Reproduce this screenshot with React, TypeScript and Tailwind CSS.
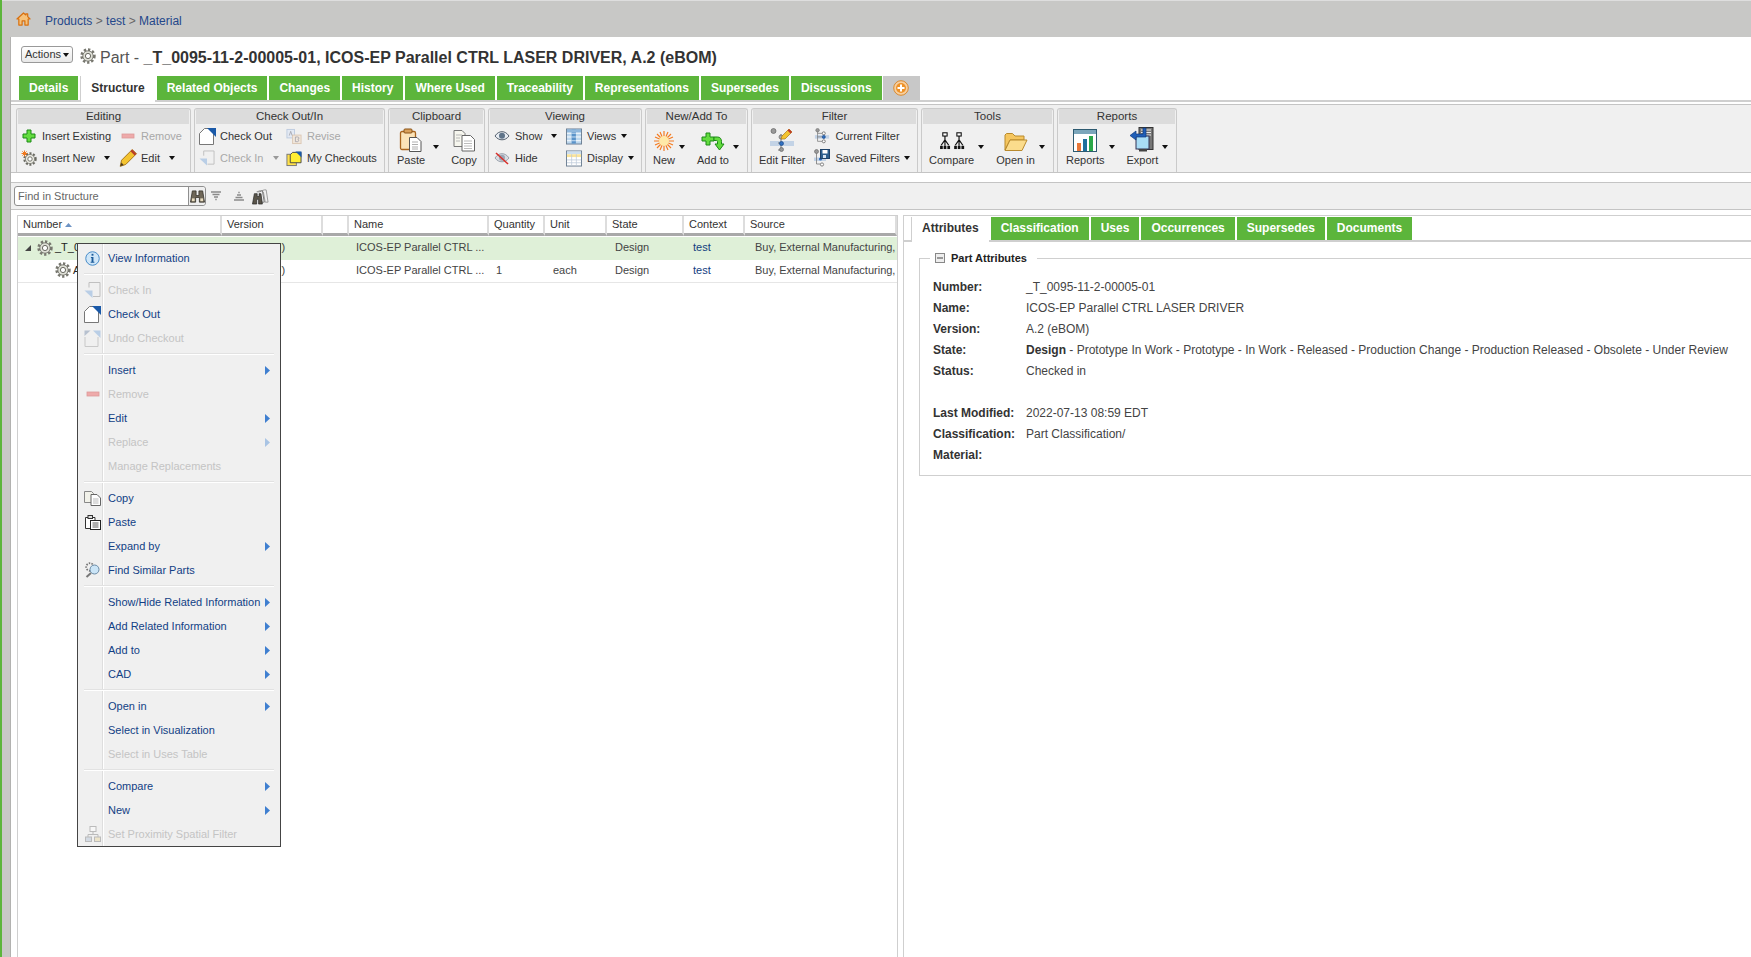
import type { ReactNode } from "react";

const GREEN = "bg-[#5cb53b]";

type IconProps = { className?: string; dim?: boolean };

function Gear({ className = "h-4 w-4" }: IconProps) {
  return (
    <svg viewBox="0 0 16 16" className={className}>
      <circle cx="8" cy="8" r="6.4" fill="none" stroke="#77776f" strokeWidth="2.6" strokeDasharray="2.3 1.9" />
      <circle cx="8" cy="8" r="5.2" fill="#dedfd6" stroke="#6a6a62" strokeWidth="0.8" />
      <circle cx="8" cy="8" r="2.6" fill="#fff" stroke="#6a6a62" strokeWidth="1" />
    </svg>
  );
}

function Home() {
  return (
    <svg viewBox="0 0 16 15" className="h-[14px] w-[15px]">
      <path d="M8 1 1 7.5h2V14h3.5V9.5h3V14H13V7.5h2L12.5 5V2h-2v1.2L8 1Z" fill="#f6c27a" stroke="#d9700f" strokeWidth="1.3" strokeLinejoin="round" />
    </svg>
  );
}

function Plus() {
  return (
    <svg viewBox="0 0 16 16" className="h-4 w-4">
      <path d="M6 2h4v4h4v4h-4v4H6v-4H2V6h4V2Z" fill="#63dc3f" stroke="#1d8a17" strokeWidth="1" />
    </svg>
  );
}

function Minus() {
  return (
    <svg viewBox="0 0 16 16" className="h-4 w-4">
      <rect x="2" y="6" width="12" height="4" fill="#eeaaaa" stroke="#dd9a9a" strokeWidth="0.8" />
    </svg>
  );
}

function GearNew() {
  return (
    <svg viewBox="0 0 16 16" className="h-4 w-4">
      <circle cx="9" cy="9" r="5.6" fill="none" stroke="#6a6a62" strokeWidth="2.2" strokeDasharray="2 1.6" />
      <circle cx="9" cy="9" r="4.6" fill="#e8e8e0" stroke="#6a6a62" strokeWidth="0.7" />
      <circle cx="9" cy="9" r="2.2" fill="#fff" stroke="#6a6a62" strokeWidth="0.9" />
      <path d="M3.5 0.5v6M0.5 3.5h6M1.4 1.4l4.2 4.2M5.6 1.4 1.4 5.6" stroke="#f0781e" strokeWidth="1" />
    </svg>
  );
}

function Pencil() {
  return (
    <svg viewBox="0 0 18 18" className="h-[20px] w-[20px] shrink-0">
      <path d="M2 16.5 3.2 11 12.8 1.4l3.8 3.8L7 14.8 2 16.5Z" fill="#f4c430" stroke="#a7761a" strokeWidth="0.9" strokeLinejoin="round" />
      <path d="M12.8 1.4l3.8 3.8-1.6 1.6-3.8-3.8 1.6-1.6Z" fill="#b8402a" />
      <path d="M2 16.5 3.2 13l1.8 2.4L2 16.5Z" fill="#4b3a20" />
    </svg>
  );
}

function CheckOutIcon() {
  return (
    <svg viewBox="0 0 17 17" className="h-[17px] w-[17px] shrink-0">
      <path d="M.5 5.500 5.500.5H14.500V16.500H.5Z" fill="#fff" stroke="#777" />
      <path d="M8 0h9V9L8 0Z" fill="#1a59a8" />
    </svg>
  );
}

function CheckInIcon() {
  return (
    <svg viewBox="0 0 17 17" className="h-[17px] w-[17px]" opacity="0.55">
      <path d="M5 .5h11v14H9M5 .5v5" fill="none" stroke="#999" />
      <path d="M.5 8.5h8V16L.5 8.5Z" fill="#8db3df" />
    </svg>
  );
}

function UndoIcon() {
  return (
    <svg viewBox="0 0 17 17" className="h-[17px] w-[17px]" opacity="0.55">
      <path d="M1 7v9.5h13V7" fill="none" stroke="#aaa" />
      <path d="M.5.500h6L.5 6V.5Z" fill="#8a9bb5" />
      <path d="M9 .5h7.5V8L9 .5Z" fill="#8db3df" />
    </svg>
  );
}

function ReviseIcon() {
  return (
    <svg viewBox="0 0 17 17" className="h-[17px] w-[17px]" opacity="0.6">
      <rect x="1" y="1" width="8" height="9" fill="#dbe6f5" stroke="#9db3d6" />
      <rect x="7" y="7" width="9" height="9" fill="#f3e2cf" stroke="#cfae8e" />
      <path d="M3.5 7.5 5 3l1.5 4.5M10 9v5h2.5a1.3 1.3 0 0 0 0-2.500a1.200 1.200 0 0 0 0-2.500H10Z" fill="none" stroke="#667" strokeWidth="0.8" />
    </svg>
  );
}

function MyCheckouts() {
  return (
    <svg viewBox="0 0 17 17" className="h-[17px] w-[17px]">
      <rect x="1" y="4" width="10" height="12" fill="#ffe14a" stroke="#777" />
      <path d="M4.500 4.500 7 2h9v11H4.500V4.500Z" fill="#ffee33" stroke="#444" />
      <path d="M10 1h6.500v6.500L10 1Z" fill="#1a59a8" />
    </svg>
  );
}

function Eye({ slash }: { slash?: boolean }) {
  return (
    <svg viewBox="0 0 16 16" className="h-4 w-4">
      <path d="M1 8c2-3 4.300-4.300 7-4.300S13 5 15 8c-2 2.600-4.300 3.800-7 3.800S3 10.600 1 8Z" fill={slash ? "#d8dce2" : "#e8edf3"} stroke={slash ? "#9aa2ad" : "#55606e"} />
      <circle cx="8" cy="7.700" r="3" fill={slash ? "#9aa6b5" : "#5e7389"} />
      {slash && <path d="M2 3l12 11" stroke="#d9302a" strokeWidth="1.600" />}
    </svg>
  );
}

function Views() {
  return (
    <svg viewBox="0 0 17 17" className="h-[17px] w-[17px]">
      <rect x="0.500" y="0.500" width="16" height="16" fill="#bcd7ee" stroke="#6a7d91" />
      <path d="M1 5h15M1 9h15M1 13h15" stroke="#fff" />
      <rect x="6" y="1" width="4.500" height="15" fill="#5a93c9" />
      <path d="M6 5h4.500M6 9h4.500M6 13h4.500" stroke="#d0e3f4" />
      <path d="M1 1h15v3H1z" fill="#8fb7dc" />
    </svg>
  );
}

function Display() {
  return (
    <svg viewBox="0 0 17 17" className="h-[17px] w-[17px]">
      <rect x="0.500" y="0.500" width="16" height="16" fill="#fff" stroke="#6a7d91" />
      <rect x="1" y="1" width="15" height="3" fill="#cddff0" />
      <rect x="1" y="4" width="15" height="3" fill="#fbe49a" />
      <path d="M1 10h15M1 13h15M6 4v12M11 4v12" stroke="#bccad8" strokeWidth="0.800" />
    </svg>
  );
}

function PasteIcon() {
  return (
    <svg viewBox="0 0 24 24" className="h-6 w-6">
      <rect x="1.500" y="3.500" width="15" height="18" rx="1.500" fill="#fbe3b8" stroke="#a9651f" strokeWidth="1.300" />
      <rect x="5" y="1" width="8" height="4" rx="1" fill="#d9a05a" stroke="#8a5217" />
      <path d="M10.500 9.500H18l4 4v10H10.500V9.500Z" fill="#fff" stroke="#555" />
      <path d="M13 14h6M13 16.500h6M13 19h6M13 21h6" stroke="#999" strokeWidth="0.800" />
    </svg>
  );
}

function CopyIcon() {
  return (
    <svg viewBox="0 0 22 22" className="h-[22px] w-[22px]">
      <path d="M1 .5h8l3 3v13H1V.5Z" fill="#f6f6ee" stroke="#777" />
      <path d="M9 5.500h8.500l4 4V21H9V5.500Z" fill="#fff" stroke="#666" />
      <path d="M3 5h6M3 8h4M3 11h4M11 11h8M11 13.500h8M11 16h8M11 18.500h8" stroke="#aaa" strokeWidth="0.800" />
    </svg>
  );
}

function StarBurst() {
  return (
    <svg viewBox="0 0 22 22" className="h-[22px] w-[22px]">
      <path d="M11 1v20M1 11h20M4 4l14 14M18 4 4 18M7 2l8 18M15 2 7 20M2 7l18 8M2 15l18-8" stroke="#f47b20" strokeWidth="1.200" />
      <circle cx="11" cy="11" r="5" fill="#ffe9a8" />
    </svg>
  );
}

function AddTo() {
  return (
    <svg viewBox="0 0 24 20" className="h-5 w-6">
      <path d="M5 1h4v4h4v4H9v4H5V9H1V5h4V1Z" fill="#63dc3f" stroke="#1d8a17" />
      <path d="M13 5h3.500c2.500 0 4 1.800 4 4.500V12H23l-4.500 6L14 12h2.500V9.500c0-.7-.3-1-1-1H13V5Z" fill="#63dc3f" stroke="#1d8a17" />
    </svg>
  );
}

function Tree({ className = "h-4 w-4" }: IconProps) {
  return (
    <svg viewBox="0 0 16 18" className={className}>
      <rect x="0" y="8" width="16" height="4" fill="#c3d3e6" />
      <circle cx="3" cy="2.500" r="2" fill="#999" stroke="#666" strokeWidth="0.600" />
      <path d="M3 4v11h5M3 10h5M3 6h5" fill="none" stroke="#777" strokeWidth="0.800" />
      <circle cx="10" cy="6" r="1.700" fill="#fff" stroke="#555" strokeWidth="0.800" />
      <circle cx="10" cy="10" r="1.700" fill="#2f6fc0" stroke="#1a4a8c" strokeWidth="0.800" />
      <circle cx="10" cy="15" r="1.700" fill="#fff" stroke="#555" strokeWidth="0.800" />
    </svg>
  );
}

function EditFilter() {
  return (
    <svg viewBox="0 0 24 24" className="h-6 w-6">
      <rect x="0" y="13" width="24" height="5" fill="#c3d3e6" />
      <circle cx="3.500" cy="3" r="2.500" fill="#999" stroke="#666" strokeWidth="0.700" />
      <path d="M11 6v16h0M11 15H8M11 22H8" stroke="#777" fill="none" />
      <circle cx="11" cy="9" r="2" fill="#aaa" stroke="#666" strokeWidth="0.700" />
      <circle cx="11.500" cy="15.500" r="2" fill="#2f6fc0" stroke="#1a4a8c" strokeWidth="0.700" />
      <circle cx="11.500" cy="21.500" r="2" fill="#999" stroke="#666" strokeWidth="0.700" />
      <path d="M11 11 12 8 19 1l3 3-7 7-4 0Z" fill="#f4c430" stroke="#a7761a" strokeWidth="0.700" />
      <path d="M19 1l3 3-1.500 1.500-3-3L19 1Z" fill="#c0392b" />
    </svg>
  );
}

function SavedFilter() {
  return (
    <svg viewBox="0 0 16 18" className="h-[18px] w-4">
      <rect x="0" y="8.500" width="12" height="3.500" fill="#c3d3e6" />
      <circle cx="2.500" cy="2.500" r="2" fill="#999" stroke="#666" strokeWidth="0.600" />
      <path d="M2.500 4v11h4" fill="none" stroke="#777" strokeWidth="0.800" />
      <circle cx="8" cy="15.500" r="1.600" fill="#fff" stroke="#555" strokeWidth="0.700" />
      <circle cx="6.500" cy="10" r="1.600" fill="#2f6fc0" />
      <rect x="6.500" y="0.500" width="9" height="9" fill="#2c5f8f" stroke="#1d4168" />
      <rect x="8.500" y="1" width="5" height="3.500" fill="#fff" />
      <rect x="9" y="6" width="3" height="3" fill="#d6e4f2" />
    </svg>
  );
}

function Compare() {
  return (
    <svg viewBox="0 0 24 18" className="h-[20px] w-[26px]">
      {[1, 14].map((x) => (
        <g key={x} transform={`translate(${x} 0)`}>
          <rect x="2.500" y="0.500" width="4" height="3" fill="#fff" stroke="#111" />
          <path d="M4.500 3.500v6M4.500 7 1 12M4.500 7 8 12M4.500 9.500v3" stroke="#111" fill="none" strokeWidth="1.100" />
          <rect x="0" y="12.500" width="2.500" height="3" fill="#111" />
          <rect x="3.300" y="12.500" width="2.500" height="3" fill="#111" />
          <rect x="6.700" y="12.500" width="2.500" height="3" fill="#111" />
        </g>
      ))}
    </svg>
  );
}

function Folder() {
  return (
    <svg viewBox="0 0 24 20" className="h-5 w-6">
      <path d="M1 18V3l1.500-1.500h6L11 4h9v4H6L1 18Z" fill="#f5c65f" stroke="#b98a2d" />
      <path d="M1 18.500 6 8h17l-5 10.500H1Z" fill="#fbdc8c" stroke="#b98a2d" />
    </svg>
  );
}

function ReportsIcon() {
  return (
    <svg viewBox="0 0 24 23" className="h-[23px] w-6">
      <rect x="0.500" y="0.500" width="23" height="22" fill="#fff" stroke="#2d5a70" />
      <rect x="1" y="1" width="22" height="4" fill="#7ba6bb" />
      <rect x="4" y="14" width="4" height="8" fill="#e8783a" />
      <rect x="10" y="10" width="4" height="12" fill="#1f6f9c" />
      <rect x="16" y="7" width="4" height="15" fill="#2aa84a" />
    </svg>
  );
}

function ExportIcon() {
  return (
    <svg viewBox="0 0 24 25" className="h-[25px] w-6">
      <rect x="9" y="0.500" width="14" height="22" fill="#777" stroke="#333" />
      <path d="M11 3h10M11 5.500h10M11 8h10" stroke="#eee" />
      <rect x="6" y="9" width="13" height="13" fill="#a9ddf6" stroke="#335" />
      <rect x="9" y="22" width="8" height="2.500" fill="#444" />
      <path d="M13 1v6H6V4L0 8.500 6 13v-3h10V1h-3Z" fill="#1f5fb8" stroke="#0e3b7c" strokeWidth="0.700" />
    </svg>
  );
}

function AddTabIcon() {
  return (
    <svg viewBox="0 0 16 16" className="h-4 w-4">
      <circle cx="8" cy="8" r="7.300" fill="#f7cf9f" stroke="#d98a30" />
      <circle cx="8" cy="8" r="5" fill="#ee9228" />
      <path d="M8 4.500v7M4.500 8h7" stroke="#fff" strokeWidth="2" />
    </svg>
  );
}

function Binoculars({ dim }: IconProps) {
  return (
    <svg viewBox="0 0 16 16" className="h-[15px] w-[15px]">
      <path d="M2.500 2h4v5h3V2h4l2 12H10V9H6v5H.5l2-12Z" fill={dim ? "#777" : "#6f6758"} stroke="#2e2a22" strokeWidth="0.800" />
      <rect x="2" y="10" width="3" height="3" fill="#e8dcc0" />
      <rect x="11" y="10" width="3" height="3" fill="#e8dcc0" />
    </svg>
  );
}

function FilterDown() {
  return (
    <svg viewBox="0 0 10 10" className="h-[10px] w-[10px]">
      <path d="M0 1h10M1.500 3.500h7M3 6h4M4.300 8.500h1.400" stroke="#8a8a8a" strokeWidth="1.300" />
    </svg>
  );
}

function FilterUp() {
  return (
    <svg viewBox="0 0 10 10" className="h-[10px] w-[10px]">
      <path d="M0 9h10M1.500 6.500h7M3 4h4M4.300 1.500h1.400" stroke="#8a8a8a" strokeWidth="1.300" />
    </svg>
  );
}

function MultiBinoculars() {
  return (
    <svg viewBox="0 0 18 18" className="h-[17px] w-[17px]">
      <path d="M7 3h3l3-1h2l2 13h-3L12 4" fill="none" stroke="#999" />
      <path d="M5 4h3l2-1h1l2 12h-3L8 6" fill="none" stroke="#777" />
      <path d="M2.500 6h3v3h2V6h2l1.500 11H7v-5H5v5H.5l2-11Z" fill="#5a554a" stroke="#222" strokeWidth="0.700" />
    </svg>
  );
}

function InfoIcon() {
  return (
    <svg viewBox="0 0 16 16" className="h-[15px] w-[15px]">
      <circle cx="8" cy="8" r="7.200" fill="#cfe6f8" stroke="#3f86c6" />
      <rect x="7" y="3" width="2" height="2" fill="#1d5c9a" />
      <path d="M6.300 6.500H9V11.500h1v1H6v-1h1v-4H6.300Z" fill="#1d5c9a" />
    </svg>
  );
}

function MenuCopy() {
  return (
    <svg viewBox="0 0 17 15" className="h-[15px] w-[17px]">
      <path d="M.5.500h7l2 2v9H.5V.5Z" fill="#f2f2ea" stroke="#888" />
      <path d="M7 3.500h6l3.500 3.500v7.500H7V3.500Z" fill="#fff" stroke="#666" />
      <path d="M9 8h5.500M9 10h5.500M9 12h5.500" stroke="#aaa" strokeWidth="0.800" />
    </svg>
  );
}

function MenuPaste() {
  return (
    <svg viewBox="0 0 16 15" className="h-[15px] w-4">
      <path d="M.5 2.500h9.500v11H.5v-11Z" fill="#fff" stroke="#333" />
      <rect x="3" y="0.500" width="4.500" height="3" fill="#ddd" stroke="#333" />
      <rect x="5.500" y="5.500" width="10" height="9" fill="#fff" stroke="#222" />
      <path d="M7.500 8h6M7.500 10h6M7.500 12h6" stroke="#333" strokeWidth="0.800" />
    </svg>
  );
}

function FindSimilar() {
  return (
    <svg viewBox="0 0 17 16" className="h-4 w-[17px]">
      <circle cx="6" cy="5" r="3.800" fill="none" stroke="#777" strokeWidth="1.800" strokeDasharray="1.500 1.200" />
      <circle cx="10.500" cy="7.500" r="4.500" fill="#cbe5f7" stroke="#6a8aa5" />
      <path d="M7 11 2.500 15" stroke="#777" strokeWidth="2" />
    </svg>
  );
}

function OrgChart() {
  return (
    <svg viewBox="0 0 16 16" className="h-4 w-4" opacity="0.5">
      <rect x="5" y="0.500" width="6" height="5" fill="#fff" stroke="#888" />
      <path d="M8 5.500v3M3 11V8.500h10V11" fill="none" stroke="#888" />
      <rect x="0.500" y="11" width="6" height="4.500" fill="#b7c6d8" stroke="#888" />
      <rect x="9.500" y="11" width="6" height="4.500" fill="#ead9a5" stroke="#888" />
    </svg>
  );
}

function DropArrow({ className = "", dim }: { className?: string; dim?: boolean }) {
  return (
    <svg viewBox="0 0 6 4" className={`h-[4px] w-[6px] shrink-0 ${className}`}>
      <path d="M0 0h6L3 4Z" fill={dim ? "#999" : "#111"} />
    </svg>
  );
}

function SubArrow({ dim }: { dim?: boolean }) {
  return (
    <svg viewBox="0 0 5 9" className="ml-auto mr-[10px] h-[9px] w-[5px] shrink-0">
      <path d="M0 0 5 4.500 0 9Z" fill={dim ? "#a9c4e4" : "#3f7fd0"} />
    </svg>
  );
}

function SmallBtn(props: { icon: ReactNode; label: string; dim?: boolean; arrow?: string }) {
  return (
    <div className="flex h-[22px] items-center whitespace-nowrap">
      <span className="flex w-[16px] shrink-0 items-center justify-center">{props.icon}</span>
      <span className={`ml-[5px] ${props.dim ? "text-[#a8a8a8]" : "text-[#333]"}`}>{props.label}</span>
      {props.arrow && <DropArrow className={props.arrow} dim={props.dim} />}
    </div>
  );
}

function BigBtn(props: { icon: ReactNode; label: string; className: string; arrow?: string }) {
  return (
    <div className={`flex ${props.className}`}>
      <div className="flex flex-col items-center">
        <span className="flex h-[28px] items-end">{props.icon}</span>
        <span className="mt-px whitespace-nowrap leading-[14px] text-[#333]">{props.label}</span>
      </div>
      {props.arrow && <DropArrow className={`mt-[21px] ${props.arrow}`} />}
    </div>
  );
}

function Group(props: { title: string; width: string; children: ReactNode }) {
  return (
    <section className={`flex h-[64px] shrink-0 flex-col rounded-t-[3px] border border-b-0 border-[#cacaca] ${props.width}`}>
      <h3 className="mx-px h-[15px] bg-[#dcdcdc] text-center text-[11.5px] leading-[15px] font-normal text-[#333]">
        {props.title}
      </h3>
      <div className="flex min-h-0 flex-1">{props.children}</div>
    </section>
  );
}

const mainTabs = ["Details", "Structure", "Related Objects", "Changes", "History", "Where Used", "Traceability", "Representations", "Supersedes", "Discussions"];
const sideTabs = ["Attributes", "Classification", "Uses", "Occurrences", "Supersedes", "Documents"];

const COLS = "grid grid-cols-[204px_101px_26px_140px_56px_62px_77px_61px_1fr]";
const tableHead = ["Number", "Version", "", "Name", "Quantity", "Unit", "State", "Context", "Source"];

function TableRow(props: { green?: boolean; child?: boolean; qty: string; unit: string }) {
  return (
    <div className={`${COLS} h-[23px] items-center whitespace-nowrap pb-[2px] text-[#444] ${props.green ? "bg-[#dff0d8]" : "border-b border-[#e6e6e6] bg-white"}`}>
      <div className="flex items-center overflow-hidden">
        {props.child ? (
          <span className="w-[37px] shrink-0" />
        ) : (
          <svg viewBox="0 0 6 6" className="ml-[7px] mr-[6px] h-[6px] w-[6px] shrink-0">
            <path d="M6 0v6H0Z" fill="#444" />
          </svg>
        )}
        <Gear className="h-[16px] w-[16px] shrink-0" />
        <span className="ml-[2px] text-[#222]">{props.child ? "A.2-00005-01" : "_T_0095-11-2-00005-01"}</span>
      </div>
      <div className="pl-[5px]">A.2 (eBOM)</div>
      <div />
      <div className="pl-[7px]">ICOS-EP Parallel CTRL ...</div>
      <div className="pl-[7px]">{props.qty}</div>
      <div className="pl-[8px]">{props.unit}</div>
      <div className="pl-[8px]">Design</div>
      <div className="pl-[9px] text-[#12407f]">test</div>
      <div className="overflow-hidden pl-[10px]">Buy, External Manufacturing,</div>
    </div>
  );
}

type MenuEntry = { label?: string; icon?: ReactNode; dim?: boolean; sub?: boolean };

const menu: MenuEntry[] = [
  { label: "View Information", icon: <InfoIcon /> },
  {},
  { label: "Check In", icon: <CheckInIcon />, dim: true },
  { label: "Check Out", icon: <CheckOutIcon /> },
  { label: "Undo Checkout", icon: <UndoIcon />, dim: true },
  {},
  { label: "Insert", sub: true },
  { label: "Remove", icon: <Minus />, dim: true },
  { label: "Edit", sub: true },
  { label: "Replace", dim: true, sub: true },
  { label: "Manage Replacements", dim: true },
  {},
  { label: "Copy", icon: <MenuCopy /> },
  { label: "Paste", icon: <MenuPaste /> },
  { label: "Expand by", sub: true },
  { label: "Find Similar Parts", icon: <FindSimilar /> },
  {},
  { label: "Show/Hide Related Information", sub: true },
  { label: "Add Related Information", sub: true },
  { label: "Add to", sub: true },
  { label: "CAD", sub: true },
  {},
  { label: "Open in", sub: true },
  { label: "Select in Visualization" },
  { label: "Select in Uses Table", dim: true },
  {},
  { label: "Compare", sub: true },
  { label: "New", sub: true },
  { label: "Set Proximity Spatial Filter", icon: <OrgChart />, dim: true },
];

function ContextMenu() {
  return (
    <div className="absolute left-[77px] top-[243px] w-[204px] border border-[#444] bg-[linear-gradient(to_right,#f0f0f0_24px,#dedede_24px,#dedede_25px,#fff_25px,#fff_26px,#f0f0f0_26px)] pt-[2px] text-[11px]">
      {menu.map((item, i) =>
        item.label ? (
          <div key={i} className="flex h-[24px] items-center whitespace-nowrap">
            <span className="flex w-[29px] shrink-0 items-center justify-center">{item.icon}</span>
            <span className={`ml-[1px] ${item.dim ? "text-[#c4c4c4]" : "text-[#123f85]"}`}>{item.label}</span>
            {item.sub && <SubArrow dim={item.dim} />}
          </div>
        ) : (
          <div key={i} className="mx-[6px] my-[3px] h-[2px] border-b border-white bg-[#e2e2e2]" />
        ),
      )}
    </div>
  );
}

const attrs: [string, ReactNode][] = [
  ["Number:", "_T_0095-11-2-00005-01"],
  ["Name:", "ICOS-EP Parallel CTRL LASER DRIVER"],
  ["Version:", "A.2 (eBOM)"],
  [
    "State:",
    <>
      <b className="text-[#333]">Design</b> - Prototype In Work - Prototype - In Work - Released - Production Change - Production Released - Obsolete - Under Review
    </>,
  ],
  ["Status:", "Checked in"],
  ["", ""],
  ["Last Modified:", "2022-07-13 08:59 EDT"],
  ["Classification:", "Part Classification/"],
  ["Material:", ""],
];

export default function App() {
  return (
    <div className="relative flex h-[957px] w-[1751px] overflow-hidden bg-[#c8c8c6] font-['Liberation_Sans',Arial,sans-serif] text-[11px]">
      <div className={`w-[2px] shrink-0 ${GREEN}`} />
      <div className="flex min-w-0 flex-1 flex-col">
        <header className="flex h-[37px] shrink-0 items-center gap-[14px] border-t border-[#dedede] pl-[14px] text-[12px]">
          <Home />
          <nav className="mt-[3px] text-[#24478a]">
            Products <span className="text-[#666]">&gt;</span> test <span className="text-[#666]">&gt;</span> Material
          </nav>
        </header>

        <main className="ml-[8px] flex min-h-0 flex-1 flex-col border-l border-[#b2b2b0] bg-white">
          <div className="flex h-[39px] shrink-0 items-center pl-[10px]">
            <button className="mb-[4px] flex h-[17px] w-[52px] items-center justify-center gap-[2px] rounded-[3px] border border-[#999] bg-gradient-to-b from-white to-[#e8e8e8] text-[11px] text-[#333]">
              Actions
              <DropArrow />
            </button>
            <Gear className="mb-[2px] ml-[7px] h-[16px] w-[16px]" />
            <h1 className="ml-[4px] mt-[2px] whitespace-nowrap text-[16px] text-[#555]">
              Part - <b className="text-[#333]">_T_0095-11-2-00005-01, ICOS-EP Parallel CTRL LASER DRIVER, A.2 (eBOM)</b>
            </h1>
          </div>

          <div className="flex h-[26px] shrink-0 items-start gap-[2px] border-b-[2px] border-[#cfcfcf] pl-[8px] text-[12px] font-bold">
            {mainTabs.map((t) =>
              t === "Structure" ? (
                <div key={t} className="z-10 flex h-[26px] items-center border-l border-[#cfcfcf] bg-white px-[10px] pb-[2px] text-[#333]">
                  {t}
                </div>
              ) : (
                <div key={t} className={`flex h-[24px] items-center px-[10px] text-white ${GREEN}`}>
                  {t}
                </div>
              ),
            )}
            <div className="-ml-px flex h-[24px] w-[37px] items-center justify-center bg-[#c8c8c8]">
              <AddTabIcon />
            </div>
          </div>

          <div className="mt-[2px] flex h-[69px] shrink-0 gap-[3px] border-y border-[#c4c4c4] bg-[#f0f0f0] pl-[5px] pt-[3px]">
            <Group title="Editing" width="w-[175px]">
              <div className="ml-[4px] w-[99px] pt-px">
                <SmallBtn icon={<Plus />} label="Insert Existing" />
                <SmallBtn icon={<GearNew />} label="Insert New" arrow="ml-[9px]" />
              </div>
              <div className="pt-px">
                <SmallBtn icon={<Minus />} label="Remove" dim />
                <SmallBtn icon={<Pencil />} label="Edit" arrow="ml-[9px]" />
              </div>
            </Group>
            <Group title="Check Out/In" width="w-[191px]">
              <div className="ml-[4px] w-[87px] pt-px">
                <SmallBtn icon={<CheckOutIcon />} label="Check Out" />
                <SmallBtn icon={<CheckInIcon />} label="Check In" dim arrow="ml-[10px]" />
              </div>
              <div className="pt-px">
                <SmallBtn icon={<ReviseIcon />} label="Revise" dim />
                <SmallBtn icon={<MyCheckouts />} label="My Checkouts" />
              </div>
            </Group>
            <Group title="Clipboard" width="w-[97px]">
              <BigBtn icon={<PasteIcon />} label="Paste" className="ml-[8px]" arrow="ml-[8px]" />
              <BigBtn icon={<CopyIcon />} label="Copy" className="ml-[12px]" />
            </Group>
            <Group title="Viewing" width="w-[154px]">
              <div className="ml-[5px] w-[72px] pt-px">
                <SmallBtn icon={<Eye />} label="Show" arrow="ml-[8px]" />
                <SmallBtn icon={<Eye slash />} label="Hide" />
              </div>
              <div className="pt-px">
                <SmallBtn icon={<Views />} label="Views" arrow="ml-[5px]" />
                <SmallBtn icon={<Display />} label="Display" arrow="ml-[5px]" />
              </div>
            </Group>
            <Group title="New/Add To" width="w-[103px]">
              <BigBtn icon={<StarBurst />} label="New" className="ml-[7px]" arrow="ml-[4px]" />
              <BigBtn icon={<AddTo />} label="Add to" className="ml-[12px]" arrow="ml-[4px]" />
            </Group>
            <Group title="Filter" width="w-[167px]">
              <BigBtn icon={<EditFilter />} label="Edit Filter" className="ml-[7px]" />
              <div className="ml-[9px] pt-px">
                <SmallBtn icon={<Tree />} label="Current Filter" />
                <SmallBtn icon={<SavedFilter />} label="Saved Filters" arrow="ml-[4px]" />
              </div>
            </Group>
            <Group title="Tools" width="w-[133px]">
              <BigBtn icon={<Compare />} label="Compare" className="ml-[7px]" arrow="ml-[4px]" />
              <BigBtn icon={<Folder />} label="Open in" className="ml-[12px]" arrow="ml-[4px]" />
            </Group>
            <Group title="Reports" width="w-[120px]">
              <BigBtn icon={<ReportsIcon />} label="Reports" className="ml-[8px]" arrow="ml-[4px]" />
              <BigBtn icon={<ExportIcon />} label="Export" className="ml-[12px]" arrow="ml-[4px]" />
            </Group>
          </div>

          <div className="mt-[9px] flex h-[28px] shrink-0 items-center border-y border-[#c4c4c4] bg-[#f0f0f0] pl-[3px]">
            <div className="flex h-[20px] w-[192px] items-center rounded-[3px] border border-[#8f8f8f] bg-white">
              <span className="flex-1 pl-[3px] text-[#666]">Find in Structure</span>
              <span className="flex h-full w-[17px] items-center justify-center rounded-r-[3px] border-l border-[#8f8f8f] bg-[#efefef]">
                <Binoculars />
              </span>
            </div>
            <span className="ml-[5px]"><FilterDown /></span>
            <span className="ml-[13px]"><FilterUp /></span>
            <span className="ml-[8px]"><MultiBinoculars /></span>
          </div>

          <div className="mt-[5px] flex min-h-0 flex-1">
            <div className="ml-[6px] w-[881px] shrink-0 border-x border-t border-[#cfcfcf]">
              <div className={`${COLS} h-[20px] whitespace-nowrap text-[#333]`}>
                {tableHead.map((h, i) => (
                  <div key={i} className="flex items-center gap-[3px] border-b-[3px] border-r-2 border-b-[#a9a9a9] border-r-[#dddddd] pl-[5px]">
                    {h}
                    {i === 0 && (
                      <svg viewBox="0 0 7 4" className="h-[4px] w-[7px]">
                        <path d="M0 4h7L3.500 0Z" fill="#6d93c4" />
                      </svg>
                    )}
                  </div>
                ))}
              </div>
              <div className="mt-[1px]">
                <TableRow green qty="" unit="" />
                <TableRow child qty="1" unit="each" />
              </div>
            </div>

            <div className="ml-[5px] min-w-0 flex-1 border-l border-t border-[#cfcfcf]">
              <div className="mt-[1px] flex h-[25px] items-start gap-[2px] border-b-[2px] border-[#cfcfcf] pl-[7px] text-[12px] font-bold">
                {sideTabs.map((t) =>
                  t === "Attributes" ? (
                    <div key={t} className="z-10 flex h-[25px] items-center border-l border-[#cfcfcf] bg-white px-[10px] pb-[4px] text-[#333]">
                      {t}
                    </div>
                  ) : (
                    <div key={t} className={`flex h-[23px] items-center px-[10px] pb-[2px] text-white ${GREEN}`}>
                      {t}
                    </div>
                  ),
                )}
              </div>
              <fieldset className="ml-[15px] mr-[-20px] mt-[9px] border border-[#cfcfcf] px-[13px] pb-[10px]">
                <legend className="-ml-[3px] flex items-center pl-[5px] pr-[10px] text-[11px] leading-[14px] font-bold text-[#222]">
                  <svg viewBox="0 0 10 10" className="mr-[6px] h-[10px] w-[10px]">
                    <rect x="0.500" y="0.500" width="9" height="9" fill="#eee" stroke="#888" />
                    <path d="M2 5h6" stroke="#444" />
                  </svg>
                  Part Attributes
                </legend>
                <dl className="mt-[11px] text-[12px]">
                  {attrs.map(([k, v], i) => (
                    <div key={i} className="flex h-[21px] items-center whitespace-nowrap">
                      <dt className="w-[93px] shrink-0 font-bold text-[#333]">{k}</dt>
                      <dd className="text-[#444]">{v}</dd>
                    </div>
                  ))}
                </dl>
              </fieldset>
            </div>
          </div>
        </main>
      </div>
      <ContextMenu />
    </div>
  );
}
